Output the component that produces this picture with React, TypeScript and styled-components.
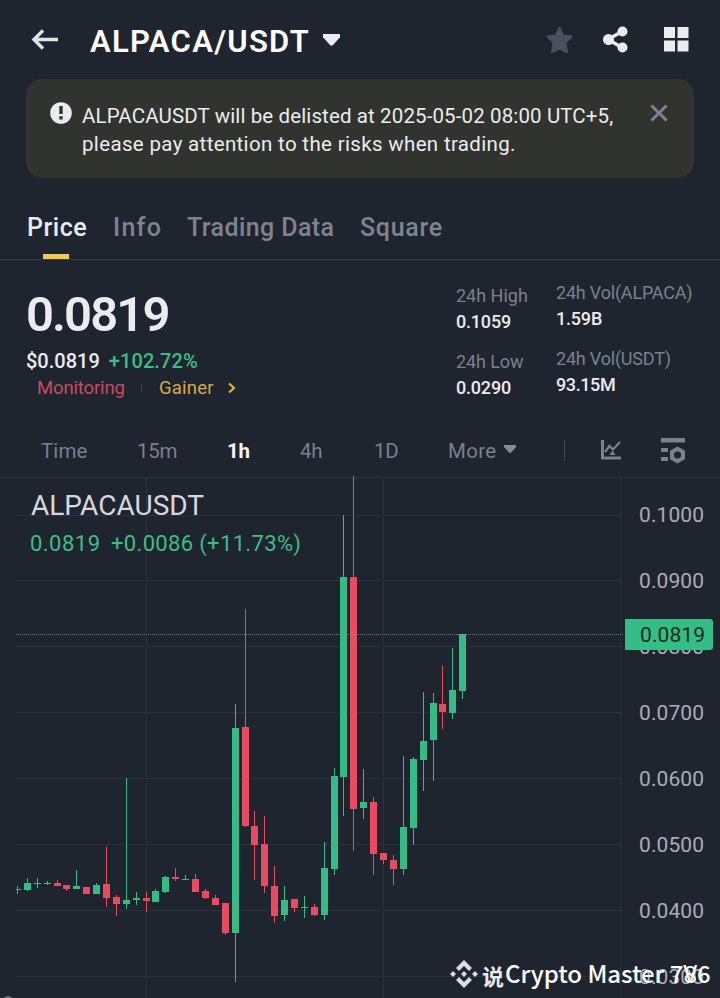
import React from "react";
import styled, { createGlobalStyle } from "styled-components";

const Global = createGlobalStyle`
  *{box-sizing:border-box}
  body{margin:0;background:#1f252f;}
  svg{display:block;flex:none}
`;

const Screen = styled.main`
  width: 720px;
  height: 998px;
  overflow: hidden;
  position: relative;
  display: flex;
  flex-direction: column;
  background: #1f252f;
  font-family: Roboto, "Liberation Sans", sans-serif;
  color: #eaecef;
  white-space: nowrap;
`;

const Header = styled.header`
  height: 79px;
  flex: none;
  display: flex;
  align-items: center;
  padding: 1px 31px 0 31px;
`;

const Pair = styled.h1<{ $spacing: number }>`
  margin: 0 0 0 31px;
  padding-top: 3px;
  font-size: 31px;
  line-height: 40px;
  font-weight: 600;
  color: #fff;
  letter-spacing: ${(p) => p.$spacing}px;
  width: 233px;
`;

const Actions = styled.div`
  margin-left: auto;
  display: flex;
  align-items: center;
  gap: 29.5px;
`;

const Notice = styled.section`
  margin: 0 26px;
  height: 99px;
  flex: none;
  border-radius: 16px;
  background: #31332f;
  display: flex;
  padding: 23px 26px 0 24px;
`;

const NoticeText = styled.p`
  margin: 0 0 0 10px;
  flex: 1;
  font-size: 20.5px;
  line-height: 28px;
`;

const Line = styled.span<{ $spacing?: number }>`
  display: block;
  letter-spacing: ${(p) => p.$spacing ?? 0}px;
`;

const Tabs = styled.nav`
  height: 82px;
  flex: none;
  display: flex;
  align-items: flex-end;
  padding-left: 27px;
  border-bottom: 1px solid #363d48;
`;

const Tab = styled.button<{ $active?: boolean; $width: number; $spacing: number }>`
  border: 0;
  padding: 0;
  background: none;
  font: 500 25px/34px Roboto, sans-serif;
  text-align: left;
  height: 65px;
  width: ${(p) => p.$width}px;
  padding-top: 17px;
  display: flex;
  flex-direction: column;
  letter-spacing: ${(p) => p.$spacing}px;
  color: ${(p) => (p.$active ? "#eaecef" : "#7d8490")};
  &::after {
    content: "";
    display: ${(p) => (p.$active ? "block" : "none")};
    width: 26px;
    height: 5px;
    margin: 9px 0 0 16px;
    background: #f1cb4c;
  }
`;

const Summary = styled.section`
  height: 162px;
  flex: none;
  display: flex;
  padding-left: 27px;
`;

const PriceBlock = styled.div`
  width: 429px;
  padding-top: 27px;
`;

const BigPrice = styled.div`
  font-size: 49px;
  line-height: 56px;
  font-weight: 600;
  letter-spacing: -1.9px;
  margin-left: -1px;
`;

const FiatRow = styled.div`
  display: flex;
  gap: 9px;
  font-size: 20px;
  line-height: 26px;
  font-weight: 500;
  margin: 5px 0 0 -1px;
`;

const Change = styled.span`
  color: #3ebd83;
  letter-spacing: 0.1px;
`;

const TagRow = styled.div`
  display: flex;
  align-items: center;
  font-size: 18.5px;
  line-height: 28px;
  padding-left: 10px;
`;

const Tag = styled.span<{ $tone: string; $width: number; $spacing: number }>`
  color: ${(p) => p.$tone};
  width: ${(p) => p.$width}px;
  letter-spacing: ${(p) => p.$spacing}px;
`;

const TagDivider = styled.i`
  width: 1px;
  height: 8px;
  background: #3c434e;
  margin-right: 17px;
`;

const StatColumn = styled.dl<{ $top: number; $width: number }>`
  margin: 0;
  width: ${(p) => p.$width}px;
  padding-top: ${(p) => p.$top}px;
  display: flex;
  flex-direction: column;
  gap: 14px;
`;

const StatLabel = styled.dt<{ $spacing: number }>`
  font-size: 18px;
  line-height: 26px;
  color: #7a818d;
  letter-spacing: ${(p) => p.$spacing}px;
`;

const StatValue = styled.dd<{ $spacing?: number }>`
  margin: 0;
  font-size: 18px;
  line-height: 26px;
  font-weight: 500;
  letter-spacing: ${(p) => p.$spacing ?? -0.2}px;
`;

const Toolbar = styled.nav`
  height: 54px;
  flex: none;
  display: flex;
  align-items: center;
  padding: 3px 34px 0 41px;
`;

const Interval = styled.button<{ $active?: boolean; $width: number; $spacing?: number }>`
  border: 0;
  background: none;
  padding: 0;
  text-align: left;
  width: ${(p) => p.$width}px;
  font: ${(p) => (p.$active ? 700 : 400)} 20.5px/28px Roboto, sans-serif;
  letter-spacing: ${(p) => p.$spacing ?? -0.3}px;
  color: ${(p) => (p.$active ? "#f2f4f7" : "#79808c")};
`;

const ToolDivider = styled.i`
  width: 1px;
  height: 21px;
  margin: 0 35px 0 48px;
  background: #444b57;
`;

const ToolGap = styled.i`
  flex: 1;
`;

const ChartArea = styled.section`
  flex: none;
  height: 522px;
`;

const Watermark = styled.div`
  position: absolute;
  left: 450px;
  top: 956px;
  display: flex;
  align-items: center;
  height: 36px;
  color: #fff;
  font: 400 24px/34px "Noto Sans CJK SC", sans-serif;
`;

const Glyph = styled.span`
  width: 23px;
  margin: 1px 0 0 4px;
  font-size: 22px;
  font-weight: 700;
  color: #e8eaec;
`;

const Author = styled.span`
  font-weight: 500;
  letter-spacing: -0.05px;
  margin-top: -2px;
`;

const Stacked = styled.span`
  display: inline-grid;
  justify-items: center;
  font-weight: 400;
  > * {
    grid-area: 1 / 1;
  }
`;

type Candle = [x: number, up: 0 | 1, top: number, bottom: number, high: number, low: number];

const candles: Candle[] = [
  [27, 1, 883, 890, 878, 891], [37, 1, 883, 884, 878, 888], [47, 1, 883, 884, 881, 885],
  [57, 0, 883, 886, 880, 886], [66, 0, 885, 889, 885, 891], [76, 1, 886, 889, 870, 889],
  [86, 0, 887, 894, 887, 894], [96, 1, 885, 894, 883, 894], [106, 0, 884, 898, 847, 907],
  [116, 0, 897, 904, 895, 916], [126, 1, 900, 904, 778, 909], [136, 1, 898, 900, 892, 905],
  [146, 0, 898, 901, 892, 912], [155, 1, 891, 902, 889, 902], [165, 1, 877, 892, 876, 893],
  [175, 0, 877, 879, 868, 881], [185, 1, 879, 880, 875, 880], [195, 0, 879, 892, 874, 892],
  [205, 0, 891, 898, 889, 899], [215, 0, 898, 905, 895, 905], [225, 0, 903, 933, 903, 935],
  [235, 1, 728, 933, 704, 982], [245, 0, 727, 826, 609, 827], [254, 0, 826, 845, 811, 880],
  [264, 0, 844, 886, 816, 893], [274, 0, 886, 916, 866, 923], [284, 1, 900, 915, 886, 921],
  [294, 0, 899, 908, 899, 912], [304, 1, 907, 908, 896, 918], [314, 0, 907, 915, 904, 916],
  [324, 1, 868, 915, 842, 920], [334, 1, 776, 869, 768, 875], [343, 1, 577, 777, 515, 816],
  [353, 0, 577, 809, 476, 851], [363, 1, 802, 808, 769, 819], [373, 0, 802, 854, 797, 875],
  [383, 0, 853, 860, 853, 864], [393, 0, 860, 869, 855, 885], [403, 1, 827, 869, 756, 875],
  [413, 1, 759, 828, 757, 845], [423, 1, 741, 760, 692, 791], [433, 1, 703, 740, 693, 781],
  [442, 0, 704, 712, 666, 729], [452, 1, 690, 713, 648, 719], [462, 1, 634, 691, 634, 699],
];

const levels: [number, string][] = [
  [515, "0.1000"], [580, "0.0900"], [646, "0.0800"], [712, "0.0700"],
  [778, "0.0600"], [844, "0.0500"], [910, "0.0400"], [976, "0.0300"],
];

const UP = "#35bb85";
const DOWN = "#ea4a62";

function Chart() {
  return (
    <svg width="720" height="522" viewBox="0 476 720 522" fontFamily="Roboto, sans-serif">
      <rect x="0" y="476" width="720" height="3" fill="#252c37" />
      {[146, 383, 620].map((x) => (
        <rect key={x} x={x} y="478" width="1" height="520" fill="#2b323c" />
      ))}
      {levels.map(([y]) => (
        <rect key={y} x="16" y={y} width="607" height="1" fill="#2b323c" />
      ))}
      <rect x="16" y="889" width="5" height="1" fill={UP} />
      <rect x="17" y="886" width="1" height="8" fill={UP} />
      {candles.map(([x, up, top, bottom, high, low]) => (
        <g key={x} fill={up ? UP : DOWN}>
          <rect x={x} y={high} width="1" height={low - high} />
          <rect x={x - 3} y={top} width="7" height={bottom - top} />
        </g>
      ))}
      <path d="M16 634.5H624" stroke="#7d9c98" strokeDasharray="1 1" strokeOpacity="0.75" />
      {levels.map(([y, label], i) => (
        <text key={label} x="639" y={i === 0 ? y + 7 : y + 8} fontSize="21" fill="#a9adb5" textLength="65">
          {label}
        </text>
      ))}
      <path d="M625 619H710a3 3 0 0 1 3 3V647a3 3 0 0 1-3 3H625Z" fill="#35bd86" />
      <text x="640" y="642" fontSize="21" fill="#13291f" textLength="65">0.0819</text>
      <text x="31" y="515" fontSize="28" fill="#d5d8dc" textLength="173">ALPACAUSDT</text>
      <text x="30" y="551" fontSize="22" fill="#3ebd83" textLength="70">0.0819</text>
      <text x="111" y="551" fontSize="22" fill="#3ebd83" textLength="190">+0.0086 (+11.73%)</text>
      <circle cx="8" cy="1002" r="6" fill="#6a717a" />
    </svg>
  );
}

export default function App() {
  return (
    <>
      <Global />
      <Screen>
        <Header>
          <svg width="28" height="24" viewBox="0 0 28 24" fill="none" stroke="#dfe2e7" strokeWidth="3.4">
            <path d="M27 11.5H3M12 2.5L3 11.5L12 20.5" />
          </svg>
          <Pair $spacing={1.3}>ALPACA/USDT</Pair>
          <svg width="17" height="15" viewBox="0 0 17 15" fill="#eaecef">
            <path d="M0 1H17V4.2L10 12Q8.500 13.500 7 12L0 4.200Z" />
          </svg>
          <Actions>
            <svg width="27" height="28" viewBox="0 0 27 28" fill="#4a515d" stroke="#4a515d" strokeWidth="2" strokeLinejoin="round">
              <path d="M13.500 2L17 9.500L25.500 10.500L19.400 16.700L21 26L13.500 22.500L6 26L7.600 16.700L1.500 10.500L10 9.500Z" />
            </svg>
            <svg width="27" height="28" viewBox="1 0 27 28" fill="#eaecef">
              <path d="M20 5.500L6 13.500L20 21.500" stroke="#eaecef" strokeWidth="3.400" fill="none" />
              <circle cx="20.500" cy="5.500" r="5" />
              <circle cx="6.500" cy="13.500" r="5.500" />
              <circle cx="20.500" cy="21.500" r="5" />
            </svg>
            <svg width="30" height="26" viewBox="-5 0 30 26" fill="#eaecef">
              <path d="M0 0H11V11H0ZM13.500 0H24.500V11H13.500ZM0 13.500H11V24.500H0ZM13.500 13.500H24.500V24.500H13.500Z" />
            </svg>
          </Actions>
        </Header>

        <Notice>
          <svg width="22" height="22" viewBox="0 0 22 22">
            <circle cx="11" cy="11" r="10.800" fill="#eaecef" />
            <path d="M9.300 4H12.700V12H9.300ZM9.300 14.300H12.700V17.500H9.300Z" fill="#31332f" />
          </svg>
          <NoticeText>
            <Line $spacing={0.12}>ALPACAUSDT will be delisted at 2025-05-02 08:00 UTC+5,</Line>
            <Line $spacing={0.34}>please pay attention to the risks when trading.</Line>
          </NoticeText>
          <svg width="18" height="22" viewBox="0 0 18 22" fill="none" stroke="#7b8294" strokeWidth="3">
            <path d="M1.500 3.500L16.500 18.500M16.500 3.500L1.500 18.500" />
          </svg>
        </Notice>

        <Tabs>
          <Tab $active $width={86} $spacing={0.5}>Price</Tab>
          <Tab $width={74} $spacing={1.3}>Info</Tab>
          <Tab $width={173} $spacing={0.4}>Trading Data</Tab>
          <Tab $width={90} $spacing={0.7}>Square</Tab>
        </Tabs>

        <Summary>
          <PriceBlock>
            <BigPrice>0.0819</BigPrice>
            <FiatRow>
              <span>$0.0819</span>
              <Change>+102.72%</Change>
            </FiatRow>
            <TagRow>
              <Tag $tone="#c94b61" $width={104} $spacing={-0.15}>Monitoring</Tag>
              <TagDivider />
              <Tag $tone="#d5aa42" $width={69} $spacing={0.2}>Gainer</Tag>
              <svg width="9" height="12" viewBox="0 0 9 12" fill="none" stroke="#e0b53e" strokeWidth="2.200">
                <path d="M1 1.500L6 6L1 10.500" />
              </svg>
            </TagRow>
          </PriceBlock>
          <StatColumn $top={23} $width={100}>
            <div>
              <StatLabel $spacing={0}>24h High</StatLabel>
              <StatValue>0.1059</StatValue>
            </div>
            <div>
              <StatLabel $spacing={-0.1}>24h Low</StatLabel>
              <StatValue>0.0290</StatValue>
            </div>
          </StatColumn>
          <StatColumn $top={20} $width={150}>
            <div>
              <StatLabel $spacing={-0.2}>24h Vol(ALPACA)</StatLabel>
              <StatValue>1.59B</StatValue>
            </div>
            <div>
              <StatLabel $spacing={-0.2}>24h Vol(USDT)</StatLabel>
              <StatValue $spacing={-0.4}>93.15M</StatValue>
            </div>
          </StatColumn>
        </Summary>

        <Toolbar>
          <Interval $width={96} $spacing={0.1}>Time</Interval>
          <Interval $width={90}>15m</Interval>
          <Interval $active $width={73}>1h</Interval>
          <Interval $width={74}>4h</Interval>
          <Interval $width={74}>1D</Interval>
          <Interval $width={56} $spacing={0.3}>More</Interval>
          <svg width="12" height="12" viewBox="0 0 12 12" fill="#858b96">
            <path d="M0 0H12V2L7 7.500Q6 8.500 5 7.500L0 2Z" />
          </svg>
          <ToolDivider />
          <svg width="21" height="22" viewBox="0 0 21 22" fill="none" stroke="#7b828d" strokeWidth="3">
            <path d="M2.500 0V18H21" />
            <path d="M5 12L9.500 6L13 9.500L20 2" strokeWidth="2.200" />
            <path d="M9.500 15L12.500 10.500L15.500 15Z" fill="#7b828d" stroke="none" />
          </svg>
          <ToolGap />
          <svg width="26" height="26" viewBox="0 0 26 26" fill="#7b828d">
            <path d="M1 0H25V4.500H1ZM1 10H8V14H1ZM1 19H8V23H1Z" />
            <path fillRule="evenodd" d="M17.500 8.500L25 12.700V21.300L17.500 25.500L10 21.300V12.700ZM17.500 13.500a3.500 3.500 0 1 0 0 7a3.500 3.500 0 1 0 0-7Z" />
          </svg>
        </Toolbar>

        <ChartArea>
          <Chart />
        </ChartArea>

        <Watermark>
          <svg width="28" height="28" viewBox="0 0 28 28" fill="#d9dbde">
            <path d="M14 0L22 8L19 11L14 6L9 11L6 8ZM14 28L22 20L19 17L14 22L9 17L6 20ZM3 11L6 14L3 17L0 14ZM25 11L28 14L25 17L22 14ZM14 11L17 14L14 17L11 14Z" />
          </svg>
          <Glyph>说</Glyph>
          <Author>
            Crypto Master 7
            <Stacked>
              <span>V</span>
              <span>8</span>
            </Stacked>
            6
          </Author>
        </Watermark>
      </Screen>
    </>
  );
}
